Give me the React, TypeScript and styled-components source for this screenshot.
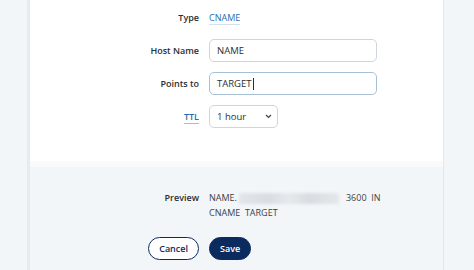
import React from "react";
import styled, { createGlobalStyle } from "styled-components";

const Global = createGlobalStyle`
  html, body { margin: 0; padding: 0; height: 100%; }
  body { font-family: "Open Sans", "Noto Sans", sans-serif; color: #2b2f33; background: #f3f6f9; }
  #root { height: 100%; }
`;

const Page = styled.div`
  display: flex;
  height: 270px;
  overflow: hidden;
`;

const Sidebar = styled.div`
  width: 27px;
  background: #f3f6f9;
  border-right: 3px solid #e6ebf0;
`;

const Gutter = styled.div`
  width: 30px;
  background: #f3f6f9;
  border-left: 1px solid #e3e8ed;
`;

const Card = styled.div`
  flex: 1;
  display: flex;
  flex-direction: column;
  background: #ffffff;
`;

const FormSection = styled.div`
  height: 167px;
  box-sizing: border-box;
  padding-top: 6px;
  border-bottom: 6px solid #f9fafb;
`;

const Footer = styled.div`
  flex: 1;
  background: #f3f6f9;
  padding-top: 23px;
`;

const Grid = styled.div<{ $gap: number }>`
  display: grid;
  grid-template-columns: 169px 1fr;
  column-gap: 10px;
  row-gap: ${(p) => p.$gap}px;
  align-items: center;
`;

const Label = styled.div<{ $link?: boolean }>`
  text-align: right;
  font-size: 9px;
  font-weight: 600;
  color: ${(p) => (p.$link ? "#2b6cb0" : "#2b2f33")};
  ${(p) => (p.$link ? "text-decoration: underline; text-decoration-color: #9fbfe0; text-underline-offset: 3px;" : "")}
`;

const Row = styled.div`
  height: 23px;
  display: flex;
  align-items: center;
`;

const LinkValue = styled.span`
  font-size: 9px;
  color: #2b6cb0;
  text-decoration: underline;
  text-decoration-color: #d4e2f0;
  text-underline-offset: 3px;
`;

const Input = styled.div<{ $focus?: boolean; $w: number }>`
  width: ${(p) => p.$w}px;
  height: 23px;
  box-sizing: border-box;
  border: 1px solid ${(p) => (p.$focus ? "#a8c0d6" : "#cfd5dc")};
  border-radius: 5px;
  background: #fff;
  padding: 0 7px 0 7px;
  display: flex;
  align-items: center;
  font-size: 9.5px;
  color: #2b2f33;
  justify-content: space-between;
`;

const SelectBox = styled(Input)`
  padding-right: 5px;
`;

const Caret = styled.span`
  display: inline-block;
  width: 1px;
  height: 12px;
  background: #2b2f33;
  margin-left: 1px;
  vertical-align: middle;
`;

const PreviewText = styled.div`
  font-size: 9px;
  line-height: 15px;
  color: #3a3f44;
  align-self: start;
`;

const PreviewLabel = styled(Label)`
  align-self: start;
  line-height: 15px;
`;

const Blur = styled.span`
  display: inline-block;
  width: 100px;
  height: 11px;
  vertical-align: middle;
  margin: 0 7px 0 2px;
  background: linear-gradient(90deg, #e2e5e9, #d9dde2 30%, #e6e9ec 50%, #d8dce1 70%, #e4e7ea);
  filter: blur(1.5px);
`;

const Buttons = styled.div`
  display: flex;
  justify-content: flex-end;
`;

const Button = styled.button<{ $primary?: boolean }>`
  height: 23px;
  box-sizing: border-box;
  border-radius: 12px;
  font-family: inherit;
  font-size: 9px;
  font-weight: 600;
  padding: 0 10px;
  cursor: pointer;
  border: 1.5px solid #0b2a5e;
  background: ${(p) => (p.$primary ? "#0b2a5e" : "#fff")};
  color: ${(p) => (p.$primary ? "#fff" : "#0b2a5e")};
`;

const ButtonCell = styled.div`
  display: flex;
  justify-content: flex-start;
`;

const Spacer = styled.div`
  height: 17px;
`;

const Chevron = () => (
  <svg width="7" height="5" viewBox="0 0 7 5" fill="none">
    <path d="M1 1 L3.5 3.5 L6 1" stroke="#444" strokeWidth="1.2" />
  </svg>
);

export default function App() {
  return (
    <>
      <Global />
      <Page>
        <Sidebar />
        <Card>
          <FormSection>
            <Grid $gap={10}>
              <Label>Type</Label>
              <Row>
                <LinkValue>CNAME</LinkValue>
              </Row>
              <Label>Host Name</Label>
              <Row>
                <Input $w={168}>NAME</Input>
              </Row>
              <Label>Points to</Label>
              <Row>
                <Input $w={168} $focus>
                  <span>
                    TARGET
                    <Caret />
                  </span>
                </Input>
              </Row>
              <Label $link>TTL</Label>
              <Row>
                <SelectBox $w={69}>
                  <span>1 hour</span>
                  <Chevron />
                </SelectBox>
              </Row>
            </Grid>
          </FormSection>
          <Footer>
            <Grid $gap={0}>
              <PreviewLabel>Preview</PreviewLabel>
              <PreviewText>
                NAME.
                <Blur />
                3600&nbsp;&nbsp;IN
                <br />
                CNAME&nbsp;&nbsp;TARGET
              </PreviewText>
            </Grid>
            <Spacer />
            <Grid $gap={0}>
              <Buttons>
                <Button>Cancel</Button>
              </Buttons>
              <ButtonCell>
                <Button $primary>Save</Button>
              </ButtonCell>
            </Grid>
          </Footer>
        </Card>
        <Gutter />
      </Page>
    </>
  );
}
